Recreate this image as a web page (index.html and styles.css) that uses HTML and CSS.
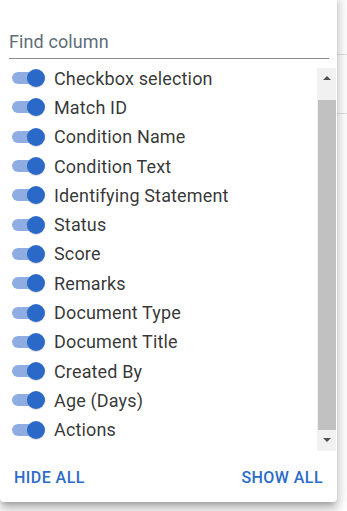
FILE: index.html
```html
<!DOCTYPE html>
<html>
<head>
<meta charset="utf-8">
<link rel="stylesheet" href="styles.css">
</head>
<body>
<div class="grid-bg">
  <div class="bg-line bg-line-1"></div>
  <div class="bg-line bg-line-2"></div>
</div>
<div class="panel">
  <div class="search">
    <div class="search-input">Find column</div>
  </div>
  <div class="scroll-area">
    <div class="list">
      <div class="list-inner">
        <div class="row"><span class="switch"><span class="track"></span><span class="thumb"></span></span><span class="label">Checkbox selection</span></div>
        <div class="row"><span class="switch"><span class="track"></span><span class="thumb"></span></span><span class="label">Match ID</span></div>
        <div class="row"><span class="switch"><span class="track"></span><span class="thumb"></span></span><span class="label">Condition Name</span></div>
        <div class="row"><span class="switch"><span class="track"></span><span class="thumb"></span></span><span class="label">Condition Text</span></div>
        <div class="row"><span class="switch"><span class="track"></span><span class="thumb"></span></span><span class="label">Identifying Statement</span></div>
        <div class="row"><span class="switch"><span class="track"></span><span class="thumb"></span></span><span class="label">Status</span></div>
        <div class="row"><span class="switch"><span class="track"></span><span class="thumb"></span></span><span class="label">Score</span></div>
        <div class="row"><span class="switch"><span class="track"></span><span class="thumb"></span></span><span class="label">Remarks</span></div>
        <div class="row"><span class="switch"><span class="track"></span><span class="thumb"></span></span><span class="label">Document Type</span></div>
        <div class="row"><span class="switch"><span class="track"></span><span class="thumb"></span></span><span class="label">Document Title</span></div>
        <div class="row"><span class="switch"><span class="track"></span><span class="thumb"></span></span><span class="label">Created By</span></div>
        <div class="row"><span class="switch"><span class="track"></span><span class="thumb"></span></span><span class="label">Age (Days)</span></div>
        <div class="row"><span class="switch"><span class="track"></span><span class="thumb"></span></span><span class="label">Actions</span></div>
      </div>
    </div>
    <div class="scrollbar">
      <div class="sb-arrow"><span class="tri-up"></span></div>
      <div class="sb-gap"></div>
      <div class="sb-thumb"></div>
      <div class="sb-arrow sb-arrow-down"><span class="tri-down"></span></div>
    </div>
  </div>
  <div class="footer">
    <span class="btn">Hide all</span>
    <span class="btn">Show all</span>
  </div>
</div>
</body>
</html>
```

FILE: styles.css
```css
* { box-sizing: border-box; }
html, body {
  margin: 0;
  padding: 0;
  width: 347px;
  height: 511px;
  overflow: hidden;
  background: #ffffff;
  font-family: Roboto, "Liberation Sans", sans-serif;
}
.grid-bg {
  width: 347px;
  height: 511px;
  display: flex;
  flex-direction: column;
}
.bg-line {
  height: 1px;
  background: #e0e0e0;
}
.bg-line-1 { margin-top: 54px; }
.bg-line-2 { margin-top: 58px; }

.panel {
  position: absolute;
  left: 0;
  top: -8px;
  width: 337px;
  height: 510px;
  background: #fff;
  border-radius: 4px;
  box-shadow: 0 5px 5px -3px rgba(0,0,0,0.2), 0 8px 10px 1px rgba(0,0,0,0.14), 0 3px 14px 2px rgba(0,0,0,0.12);
  display: flex;
  flex-direction: column;
}
.search {
  padding: 38px 8px 0 9px;
}
.search-input {
  width: 320px;
  height: 29px;
  border-bottom: 1px solid #8c8c8c;
  font-size: 18px;
  line-height: 22px;
  padding-top: 1px;
  color: #5e6d78;
  letter-spacing: 0.1px;
}
.scroll-area {
  margin-top: 9px;
  height: 383px;
  display: flex;
  flex-direction: row;
}
.list {
  flex: 1;
  overflow: hidden;
}
.list-inner {
  margin-top: -4.5px;
  display: flex;
  flex-direction: column;
}
.row {
  height: 29.3px;
  display: flex;
  align-items: center;
  padding-left: 12px;
}
.switch {
  width: 33px;
  height: 18px;
  display: flex;
  align-items: center;
  position: relative;
  flex-shrink: 0;
}
.track {
  width: 30px;
  height: 12px;
  border-radius: 6px;
  background: #8fade2;
}
.thumb {
  position: absolute;
  left: 15px;
  top: 0;
  width: 18px;
  height: 18px;
  border-radius: 50%;
  background: #2a69c7;
  box-shadow: 0 1px 1px rgba(0,0,0,0.15);
}
.label {
  margin-left: 9px;
  font-size: 18px;
  color: rgba(0,0,0,0.8);
  letter-spacing: 0.15px;
  white-space: nowrap;
}
.scrollbar {
  width: 19px;
  margin-right: 1px;
  background: #f1f1f1;
  display: flex;
  flex-direction: column;
}
.sb-arrow {
  height: 17px;
  display: flex;
  align-items: center;
  justify-content: center;
  padding-top: 3px;
}
.sb-arrow-down {
  padding-top: 0;
  padding-bottom: 2px;
  height: 21px;
}
.tri-up {
  width: 0;
  height: 0;
  border-left: 4px solid transparent;
  border-right: 4px solid transparent;
  border-bottom: 4px solid #505050;
}
.tri-down {
  width: 0;
  height: 0;
  border-left: 4px solid transparent;
  border-right: 4px solid transparent;
  border-top: 4px solid #505050;
}
.sb-gap { height: 15px; }
.sb-thumb {
  flex: 1;
  margin-left: 1px;
  background: #c1c1c1;
}
.footer {
  display: flex;
  justify-content: space-between;
  padding: 16px 14px 0 14px;
}
.btn {
  font-size: 16px;
  font-weight: 500;
  letter-spacing: 0.45px;
  text-transform: uppercase;
  color: #2b6cc8;
  line-height: 22px;
}
```
